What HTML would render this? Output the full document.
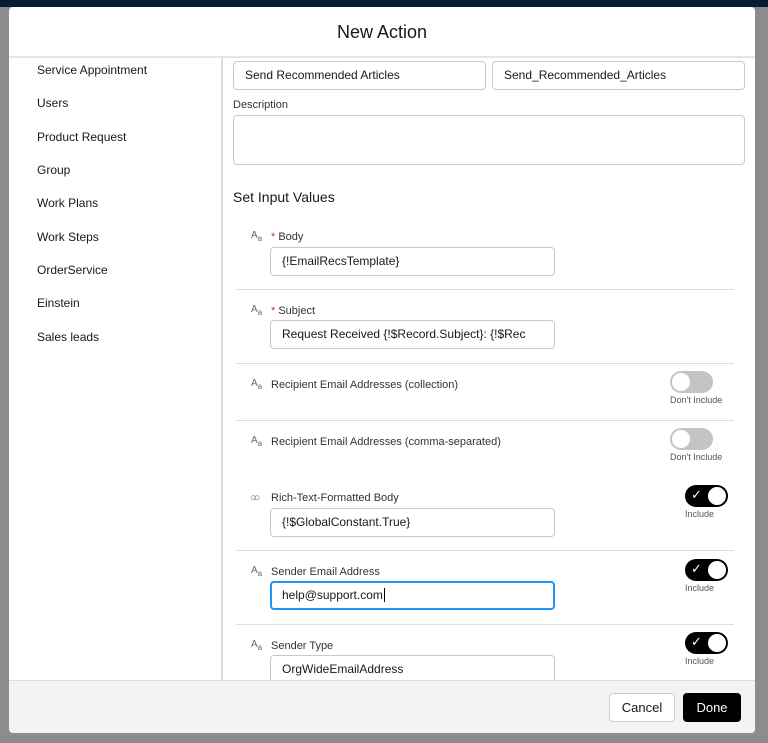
<!DOCTYPE html>
<html><head><style>
*{box-sizing:border-box;margin:0;padding:0}
body{width:768px;height:743px;background:#8c8c8c;font-family:"Liberation Sans",sans-serif;position:relative;overflow:hidden;color:#181818}
.top{position:absolute;left:0;top:0;width:768px;height:7px;background:#0b1a33}
.modal{position:absolute;left:9px;top:7px;width:746px;height:726px;background:#fff;border-radius:4px;overflow:hidden}
.hdr{position:absolute;left:0;top:0;width:746px;height:51px;border-bottom:2px solid #e5e5e5;text-align:center;font-size:18px;line-height:50px}
.side{position:absolute;left:0;top:51px;width:214px;height:622px;border-right:2px solid #ddd}
.side div{position:absolute;left:28px;font-size:12px}
.main{position:absolute;left:215px;top:51px;width:531px;height:622px;overflow:hidden}
.in{position:absolute;border:1px solid #c9c9c9;border-radius:4px;height:29px;font-size:12px;line-height:27px;padding-left:11px;background:#fff}
.lbl{position:absolute;font-size:11px;color:#333}
.aa{position:absolute;font-size:10px;color:#666}
.aa sub{font-size:8px}
.sep{position:absolute;left:12px;width:498px;height:1px;background:#ddd}
.tg{position:absolute;width:43px;height:22px;border-radius:11px}
.tg.off{background:#c4c4c4}
.tg.on{background:#000}
.tg .k{position:absolute;top:2px;width:18px;height:18px;border-radius:50%;background:#fff}
.tg.off .k{left:2px}.tg.on .k{right:2px}
.tl{position:absolute;font-size:9px;color:#555}
.ftr{position:absolute;left:0;top:673px;width:746px;height:53px;background:#f3f3f3;border-top:1px solid #ddd}
.btn{position:absolute;top:12px;height:29px;border-radius:4px;font-size:13px;line-height:29px;text-align:center}
</style></head><body>
<div class="top"></div>
<div class="modal">
<div class="hdr">New Action</div>
<div class="side">
<div style="top:5px">Service Appointment</div>
<div style="top:38px">Users</div>
<div style="top:72px">Product Request</div>
<div style="top:105px">Group</div>
<div style="top:138px">Work Plans</div>
<div style="top:172px">Work Steps</div>
<div style="top:205px">OrderService</div>
<div style="top:238px">Einstein</div>
<div style="top:272px">Sales leads</div>
</div>
<div class="main">
<div class="in" style="left:9px;top:3px;width:253px">Send Recommended Articles</div>
<div class="in" style="left:268px;top:3px;width:253px">Send_Recommended_Articles</div>
<div class="lbl" style="left:9px;top:41px">Description</div>
<div class="in" style="left:9px;top:57px;width:512px;height:50px"></div>
<div style="position:absolute;left:9px;top:131px;font-size:14px">Set Input Values</div>

<div class="aa" style="left:27px;top:172px">A<sub>a</sub></div>
<div class="lbl" style="left:47px;top:173px"><span style="color:#c23934">*</span> Body</div>
<div class="in" style="left:46px;top:189px;width:285px">{!EmailRecsTemplate}</div>
<div class="sep" style="top:231px"></div>

<div class="aa" style="left:27px;top:246px">A<sub>a</sub></div>
<div class="lbl" style="left:47px;top:247px"><span style="color:#c23934">*</span> Subject</div>
<div class="in" style="left:46px;top:262px;width:285px">Request Received {!$Record.Subject}: {!$Rec</div>
<div class="sep" style="top:305px"></div>

<div class="aa" style="left:27px;top:320px">A<sub>a</sub></div>
<div class="lbl" style="left:47px;top:321px">Recipient Email Addresses (collection)</div>
<div class="tg off" style="left:446px;top:313px"><div class="k"></div></div>
<div class="tl" style="left:446px;top:337px">Don't Include</div>
<div class="sep" style="top:362px"></div>

<div class="aa" style="left:27px;top:377px">A<sub>a</sub></div>
<div class="lbl" style="left:47px;top:378px">Recipient Email Addresses (comma-separated)</div>
<div class="tg off" style="left:446px;top:370px"><div class="k"></div></div>
<div class="tl" style="left:446px;top:394px">Don't Include</div>

<div class="aa" style="left:26px;top:434px;font-size:11px;letter-spacing:-3px">○○</div>
<div class="lbl" style="left:47px;top:434px">Rich-Text-Formatted Body</div>
<div class="in" style="left:46px;top:450px;width:285px">{!$GlobalConstant.True}</div>
<div class="tg on" style="left:461px;top:427px"><div class="k"></div><span style="position:absolute;left:6px;top:2px;color:#fff;font-size:13px">✓</span></div>
<div class="tl" style="left:461px;top:451px">Include</div>
<div class="sep" style="top:492px"></div>

<div class="aa" style="left:27px;top:507px">A<sub>a</sub></div>
<div class="lbl" style="left:47px;top:508px">Sender Email Address</div>
<div class="in" style="left:46px;top:523px;width:285px;border:2px solid #1b96ff;line-height:25px;padding-left:10px">help@support.com<span style="border-left:1px solid #000;margin-left:1px"></span></div>
<div class="tg on" style="left:461px;top:501px"><div class="k"></div><span style="position:absolute;left:6px;top:2px;color:#fff;font-size:13px">✓</span></div>
<div class="tl" style="left:461px;top:525px">Include</div>
<div class="sep" style="top:566px"></div>

<div class="aa" style="left:27px;top:581px">A<sub>a</sub></div>
<div class="lbl" style="left:47px;top:582px">Sender Type</div>
<div class="in" style="left:46px;top:597px;width:285px">OrgWideEmailAddress</div>
<div class="tg on" style="left:461px;top:574px"><div class="k"></div><span style="position:absolute;left:6px;top:2px;color:#fff;font-size:13px">✓</span></div>
<div class="tl" style="left:461px;top:598px">Include</div>
</div>
<div class="ftr">
<div class="btn" style="left:600px;width:66px;background:#fff;border:1px solid #ccc;line-height:27px">Cancel</div>
<div class="btn" style="left:674px;width:58px;background:#000;color:#fff">Done</div>
</div>
</div>
</body></html>
